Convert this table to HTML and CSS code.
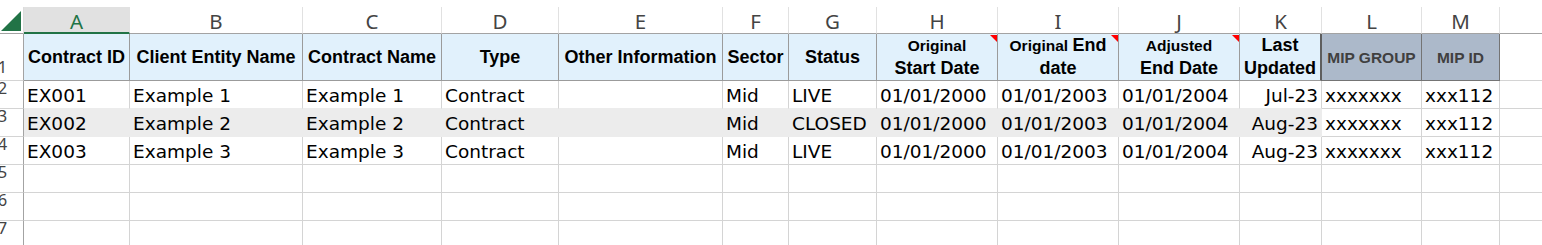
FILE: index.html
```html
<!DOCTYPE html>
<html lang="en">
<head>
<meta charset="utf-8">
<title>Contracts sheet</title>
<link rel="stylesheet" href="styles.css">
</head>
<body>
<div class="sheet">
  <div class="corner"><svg width="20" height="20" viewBox="0 0 20 20"><polygon points="20,0 20,20 0,20" fill="#217346"/></svg></div>
  <div class="ch sel">A</div><div class="ch">B</div><div class="ch">C</div><div class="ch">D</div><div class="ch">E</div><div class="ch">F</div><div class="ch">G</div><div class="ch">H</div><div class="ch">I</div><div class="ch">J</div><div class="ch">K</div><div class="ch">L</div><div class="ch">M</div><div class="ch"></div>

  <div class="rh r1">1</div>
  <div class="hd">Contract ID</div>
  <div class="hd">Client Entity Name</div>
  <div class="hd">Contract Name</div>
  <div class="hd">Type</div>
  <div class="hd">Other Information</div>
  <div class="hd">Sector</div>
  <div class="hd">Status</div>
  <div class="hd note"><span class="sm">Original</span><span>Start Date</span></div>
  <div class="hd note"><span><span class="sm">Original </span>End</span><span>date</span></div>
  <div class="hd note"><span class="sm">Adjusted</span><span>End Date</span></div>
  <div class="hd kcol"><span>Last</span><span>Updated</span></div>
  <div class="hd mip">MIP GROUP</div>
  <div class="hd mip">MIP ID</div>
  <div class="e"></div>

  <div class="rh">2</div>
  <div class="c ab">EX001</div><div class="c ab">Example 1</div><div class="c ab">Example 1</div><div class="c ab">Contract</div><div class="c ab"></div><div class="c ab">Mid</div><div class="c ab">LIVE</div><div class="c ab">01/01/2000</div><div class="c ab">01/01/2003</div><div class="c ab">01/01/2004</div><div class="c ab r">Jul-23</div><div class="c">xxxxxxx</div><div class="c">xxx112</div><div class="e"></div>

  <div class="rh">3</div>
  <div class="c g">EX002</div><div class="c g">Example 2</div><div class="c g">Example 2</div><div class="c g">Contract</div><div class="c g"></div><div class="c g">Mid</div><div class="c g">CLOSED</div><div class="c g">01/01/2000</div><div class="c g">01/01/2003</div><div class="c g">01/01/2004</div><div class="c g r">Aug-23</div><div class="c">xxxxxxx</div><div class="c">xxx112</div><div class="e"></div>

  <div class="rh">4</div>
  <div class="c">EX003</div><div class="c">Example 3</div><div class="c">Example 3</div><div class="c">Contract</div><div class="c"></div><div class="c">Mid</div><div class="c">LIVE</div><div class="c">01/01/2000</div><div class="c">01/01/2003</div><div class="c">01/01/2004</div><div class="c r">Aug-23</div><div class="c">xxxxxxx</div><div class="c">xxx112</div><div class="e"></div>

  <div class="rh">5</div>
  <div class="e"></div><div class="e"></div><div class="e"></div><div class="e"></div><div class="e"></div><div class="e"></div><div class="e"></div><div class="e"></div><div class="e"></div><div class="e"></div><div class="e"></div><div class="e"></div><div class="e"></div><div class="e"></div>

  <div class="rh">6</div>
  <div class="e"></div><div class="e"></div><div class="e"></div><div class="e"></div><div class="e"></div><div class="e"></div><div class="e"></div><div class="e"></div><div class="e"></div><div class="e"></div><div class="e"></div><div class="e"></div><div class="e"></div><div class="e"></div>

  <div class="rh">7</div>
  <div class="e"></div><div class="e"></div><div class="e"></div><div class="e"></div><div class="e"></div><div class="e"></div><div class="e"></div><div class="e"></div><div class="e"></div><div class="e"></div><div class="e"></div><div class="e"></div><div class="e"></div><div class="e"></div>
</div>
</body>
</html>
```
FILE: styles.css
```css
html, body {
  margin: 0;
  padding: 0;
  background: #ffffff;
  overflow: hidden;
}
body {
  padding-top: 7px;
}
.sheet {
  display: grid;
  grid-template-columns: 47px 106px 173px 139px 117px 164px 66px 88px 121px 121px 121px 82px 100px 78px 100px;
  grid-template-rows: 27px 47px repeat(6, 28px);
  margin-left: -23px;
  width: 1623px;
}
.sheet > div {
  box-sizing: border-box;
  border-right: 1px solid #d4d4d4;
  border-bottom: 1px solid #d4d4d4;
  overflow: hidden;
  white-space: nowrap;
  min-width: 0;
}
.corner {
  display: flex;
  justify-content: flex-end;
  align-items: flex-end;
  padding: 0 2px 2px 0;
  border-right-color: #dcdcdc !important;
  border-bottom-color: #a3a3a3 !important;
}
.corner svg { display: block; }
.ch {
  font-family: "Noto Sans", "DejaVu Sans", sans-serif;
  font-size: 20.5px;
  color: #444444;
  text-align: center;
  line-height: 26px;
  padding-top: 1px;
  border-right-color: #e1e1e1 !important;
  border-bottom-color: #a3a3a3 !important;
}
.ch.sel {
  background: #e1e1e1;
  color: #217346;
  border-bottom: 2px solid #217346 !important;
}
.rh {
  font-family: "Noto Sans", "DejaVu Sans", sans-serif;
  font-size: 16.5px;
  color: #444444;
  display: flex;
  justify-content: center;
  align-items: flex-end;
  padding: 0 0 9px 5px;
  border-right-color: #a3a3a3 !important;
}
.rh.r1 { padding-bottom: 2px; }
.hd {
  position: relative;
  background: #e1f1fc;
  border-right-color: #9b9b9b !important;
  border-bottom-color: #9b9b9b !important;
  font-family: "Liberation Sans", Arial, sans-serif;
  font-weight: bold;
  font-size: 18px;
  line-height: 23px;
  color: #000000;
  display: flex;
  flex-direction: column;
  justify-content: center;
  align-items: center;
  text-align: center;
}
.hd .sm { font-size: 15.5px; }
.hd.note::after {
  content: "";
  position: absolute;
  top: 1px;
  right: 0;
  border-top: 7px solid #ff0000;
  border-left: 7px solid transparent;
}
.hd.kcol {
  border-right: 2px solid #5e5e5e !important;
}
.hd.mip {
  background: #acb9ca;
  color: #404040;
  font-size: 15.5px;
  border-right-color: #747474 !important;
  border-bottom-color: #747474 !important;
}
.c {
  font-family: "DejaVu Sans", Verdana, sans-serif;
  font-size: 18.5px;
  line-height: 24px;
  padding: 3px 3px 0 3px;
  color: #000000;
}
.c.r { text-align: right; }
.c.ab { border-bottom-color: #ececec; }
.c.g {
  background: #ececec;
  border-color: #ececec;
}
```
